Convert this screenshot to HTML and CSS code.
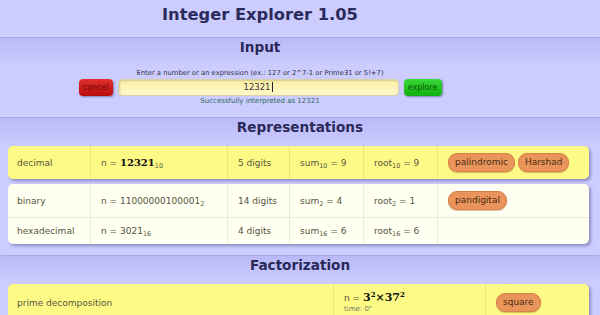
FILE: index.html
```html
<!DOCTYPE html>
<html>
<head>
<meta charset="utf-8">
<link rel="stylesheet" href="styles.css">
</head>
<body>
<div class="top">
  <h1 class="title">Integer Explorer 1.05</h1>
</div>
<div class="section">
  <h2 class="shead shift">Input</h2>
  <div class="inputbox shift">
    <div class="hint">Enter a number or an expression (ex.: 127 or 2^7-1 or Prime31 or 5!+7)</div>
    <div class="controls">
      <span class="btn cancel">cancel</span>
      <span class="field"><span class="caret">12321</span></span>
      <span class="btn explore">explore</span>
    </div>
    <div class="ok">Successfully interpreted as 12321</div>
  </div>
</div>
<div class="section">
  <h2 class="shead">Representations</h2>
  <div class="card yellow">
    <div class="row rep">
      <div class="cell"><span>decimal</span></div>
      <div class="cell"><span>n = <b class="num">12321</b><sub>10</sub></span></div>
      <div class="cell"><span>5 digits</span></div>
      <div class="cell"><span>sum<sub>10</sub> = 9</span></div>
      <div class="cell"><span>root<sub>10</sub> = 9</span></div>
      <div class="cell"><span><span class="badge">palindromic</span><span class="badge">Harshad</span></span></div>
    </div>
  </div>
  <div class="card cream">
    <div class="row rep line">
      <div class="cell"><span>binary</span></div>
      <div class="cell"><span>n = 11000000100001<sub>2</sub></span></div>
      <div class="cell"><span>14 digits</span></div>
      <div class="cell"><span>sum<sub>2</sub> = 4</span></div>
      <div class="cell"><span>root<sub>2</sub> = 1</span></div>
      <div class="cell"><span><span class="badge">pandigital</span></span></div>
    </div>
    <div class="row rep">
      <div class="cell"><span>hexadecimal</span></div>
      <div class="cell"><span>n = 3021<sub>16</sub></span></div>
      <div class="cell"><span>4 digits</span></div>
      <div class="cell"><span>sum<sub>16</sub> = 6</span></div>
      <div class="cell"><span>root<sub>16</sub> = 6</span></div>
      <div class="cell"></div>
    </div>
  </div>
</div>
<div class="section">
  <h2 class="shead">Factorization</h2>
  <div class="card yellow">
    <div class="row fac">
      <div class="cell"><span>prime decomposition</span></div>
      <div class="cell stack">
        <div>n = <b class="num big">3<sup>2</sup>×37<sup>2</sup></b></div>
        <div class="time">time: 0"</div>
      </div>
      <div class="cell"><span><span class="badge">square</span></span></div>
    </div>
  </div>
</div>
</body>
</html>
```
FILE: styles.css
```css
html, body {
  margin: 0;
  padding: 0;
}
body {
  background: #ccccff;
  font-family: "DejaVu Sans", Verdana, sans-serif;
  color: #555540;
  overflow: hidden;
  height: 315px;
}
.top {
  height: 37px;
  padding-right: 80px;
}
.title {
  margin: 0;
  text-align: center;
  font-size: 16.3px;
  line-height: 29px;
  color: #2b2b5c;
}
.section {
  border-top: 1px solid #aaaadd;
  background: linear-gradient(#babaf8 0, #ccccff 28px);
  padding-bottom: 11px;
}
.shead {
  margin: 0;
  text-align: center;
  font-size: 13.6px;
  line-height: 18px;
  color: #2a2a58;
}
.shift {
  padding-right: 80px;
}
.inputbox {
  margin-top: 12px;
  text-align: center;
}
.hint {
  font-size: 6.8px;
  line-height: 10px;
  color: #333344;
}
.controls {
  display: flex;
  justify-content: center;
  align-items: center;
  gap: 5px;
  margin-top: 1px;
}
.btn {
  height: 17px;
  line-height: 17px;
  font-size: 8px;
  border-radius: 4px;
  box-shadow: 1px 1px 2px rgba(60, 60, 110, 0.55);
}
.cancel {
  width: 34px;
  background: linear-gradient(#e03030, #b80c0c);
  color: #7a0808;
}
.explore {
  width: 38px;
  background: linear-gradient(#38d838, #10b010);
  color: #0a5a0a;
}
.field {
  width: 279px;
  height: 15px;
  line-height: 15px;
  border: 1px solid #d8d0a8;
  border-radius: 4px;
  background: linear-gradient(#fff0a8, #fff8c8);
  font-size: 8.5px;
  color: #333;
  box-shadow: inset 1px 1px 2px rgba(150, 140, 90, 0.4);
}
.caret {
  border-right: 1px solid #222;
  padding-right: 1px;
}
.ok {
  font-size: 7px;
  line-height: 10px;
  color: #2a6a58;
}
.card {
  margin: 10px 11px 0 8px;
  border-radius: 5px;
  overflow: hidden;
  box-shadow: 2px 2px 3px rgba(90, 90, 140, 0.55);
}
.card + .card {
  margin-top: 5px;
}
.yellow {
  background: #fdfb86;
}
.cream {
  background: #fffff2;
}
.row {
  display: grid;
  font-size: 9px;
}
.rep {
  grid-template-columns: 82px 137px 62px 74px 74px 1fr;
}
.fac {
  grid-template-columns: 325px 152px 1fr;
}
.line {
  border-bottom: 1px solid #ecebd8;
}
.cell {
  display: flex;
  align-items: center;
  padding: 7px 9px 7px 10px;
  line-height: 12px;
  min-height: 12px;
  white-space: nowrap;
}
.cell:first-child {
  padding-left: 9px;
}
.yellow .cell + .cell {
  border-left: 1px solid #ebe476;
}
.cream .cell + .cell {
  border-left: 1px solid #ecebd8;
}
.cell sub {
  font-size: 6.5px;
  vertical-align: -2px;
  line-height: 0;
}
.num {
  font-family: "DejaVu Serif", Georgia, serif;
  font-size: 10px;
  color: #111;
}
.num.big {
  font-size: 11px;
}
.num sup {
  font-size: 7px;
  vertical-align: 4px;
  line-height: 0;
}
.badge {
  display: inline-block;
  vertical-align: middle;
  height: 17px;
  line-height: 17px;
  padding: 0 6px;
  margin-right: 3px;
  background: #e9945b;
  border: 1px solid #d78048;
  border-radius: 9px;
  color: #4e2c12;
  box-shadow: 0 1px 1px rgba(150, 80, 30, 0.35);
}
.stack {
  flex-direction: column;
  align-items: flex-start;
  justify-content: center;
  padding-top: 8px;
}
.time {
  font-size: 7px;
  line-height: 9px;
  color: #777766;
  margin-top: 1px;
}
```
